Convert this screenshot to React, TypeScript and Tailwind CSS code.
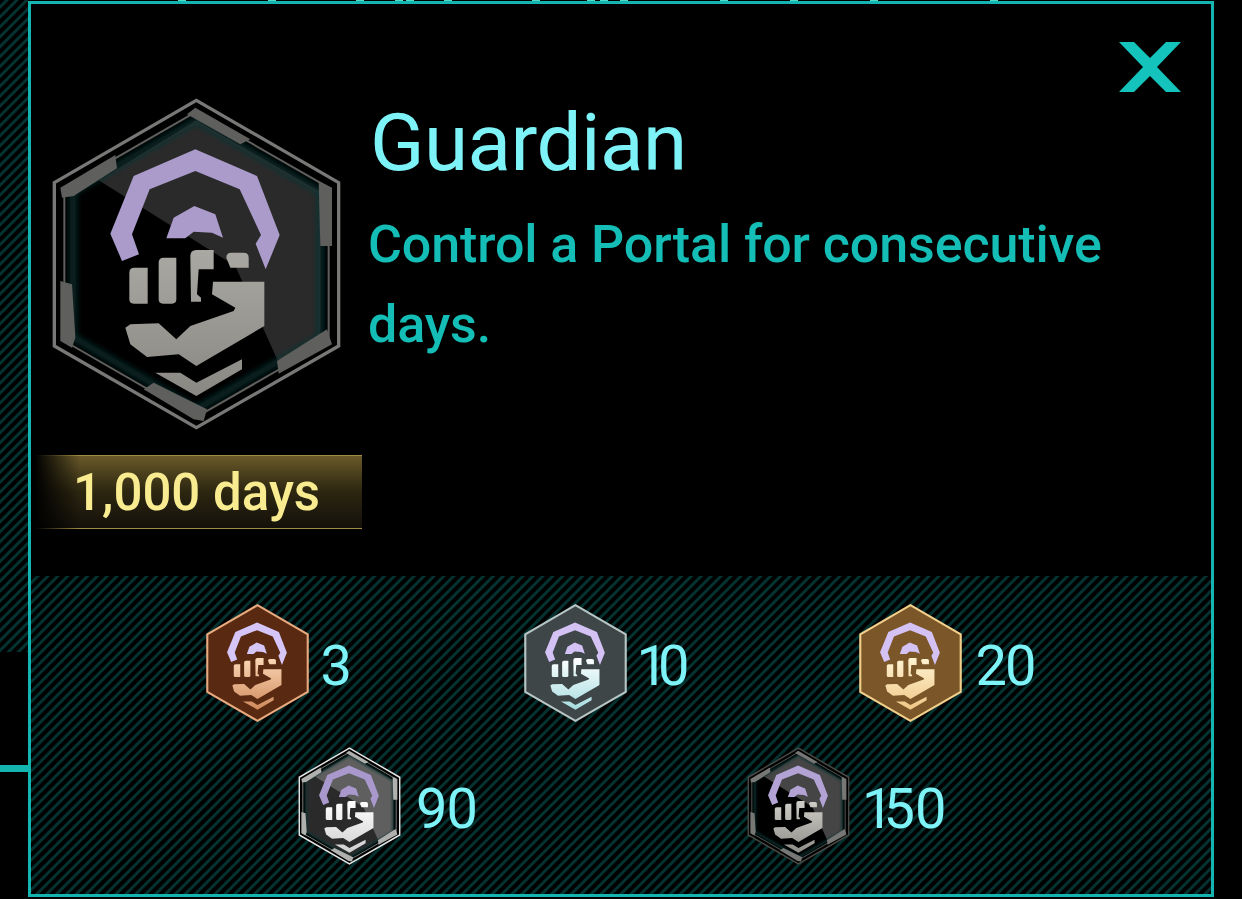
import { useId, type ReactNode } from "react";

const STRIPES =
  "bg-[repeating-linear-gradient(135deg,#000_0px,#000_3px,#043230_4px,#043230_6px,#000_7px)]";

const HEX = "498,58 925,305 925,795 498,1040 72,795 72,305";
const INNER_HEX = "498,118 870,332 870,768 498,985 128,768 128,332";
const GLASS = "205,298 498,118 870,332 870,768 745,845 615,555";

const ARC_OUTER =
  "M240 458 L310 285 L495 205 L680 285 L748 462 L706 565 L676 488 L692 462 L628 325 L495 270 L358 325 L305 460 L326 520 L275 540 Z";
const ARC_INNER = "M408 472 L430 410 L492 375 L555 400 L578 470 L545 455 L490 452 L465 472 Z";
const FIST = [
  "M297 575 Q297 560 312 560 L352 560 L352 668 L310 668 Q297 668 297 655 Z",
  "M385 545 Q385 530 400 530 L438 530 L438 655 Q438 668 425 668 L398 668 Q385 668 385 655 Z",
  "M480 525 Q480 507 498 507 L550 507 L550 565 L505 565 L500 640 L512 650 L512 662 L482 662 Z",
  "M588 530 Q588 515 603 515 L640 515 Q655 515 655 530 L655 560 L600 560 Z",
  "M548 602 L702 602 L702 735 L498 855 L445 820 L350 828 L300 790 L285 740 L300 730 L385 727 L438 775 L480 735 L610 690 L615 680 L545 640 Z",
  "M375 875 L450 875 L498 905 L635 835 L635 865 L498 945 Z",
];
const BRACKETS = [
  "470,100 495,80 660,175 630,190",
  "90,320 255,222 260,262 130,345 95,350",
  "865,300 905,320 905,495 870,495",
  "90,600 125,610 135,770 125,800 90,780",
  "340,925 370,905 530,985 520,1020 490,1015",
  "740,840 890,745 905,790 745,878",
];
// tails of the clipped row above the dialog
const TOP_BITS = [178, 268, 356, 395, 406, 444, 532, 587, 600, 620, 720, 790, 870, 990];

type BadgeProps = {
  className: string;
  outline: string;
  fill: string;
  arc: string;
  fistTop: string;
  fistBottom: string;
  strokeWidth?: number;
  framed?: boolean;
  glass?: string;
  bracket?: string;
};

function Badge({
  className,
  outline,
  fill,
  arc,
  fistTop,
  fistBottom,
  strokeWidth = 18,
  framed,
  glass = "#fff",
  bracket = "#5f5f5d",
}: BadgeProps) {
  const id = useId();
  return (
    <svg viewBox="62 48 873 1002" className={`shrink-0 ${className}`}>
      <defs>
        <linearGradient id={id} x1="0" y1="505" x2="0" y2="945" gradientUnits="userSpaceOnUse">
          <stop offset="0" stopColor={fistTop} />
          <stop offset="1" stopColor={fistBottom} />
        </linearGradient>
        <filter id={`${id}-glow`} x="-10%" y="-10%" width="120%" height="120%">
          <feGaussianBlur stdDeviation="10" />
        </filter>
      </defs>
      {framed ? (
        <>
          <polygon points={HEX} fill="#000" stroke={outline} strokeWidth={strokeWidth} />
          <polygon points={INNER_HEX} fill={fill} />
          <polygon points={GLASS} fill={glass} />
          <polygon points={INNER_HEX} fill="none" stroke="#0c3634" strokeWidth="16" filter={`url(#${id}-glow)`} />
          <polygon points="498,92 895,320 895,780 498,1008 102,780 102,320" fill="none" stroke={bracket} strokeWidth="6" />
          {BRACKETS.map((p) => (
            <polygon key={p} points={p} fill={bracket} />
          ))}
        </>
      ) : (
        <polygon points={HEX} fill={fill} stroke={outline} strokeWidth={strokeWidth} strokeLinejoin="miter" />
      )}
      <path d={ARC_OUTER} fill={arc} />
      <path d={ARC_INNER} fill={arc} />
      {FIST.map((d) => (
        <path key={d} d={d} fill={`url(#${id})`} />
      ))}
    </svg>
  );
}

function Tier({ value, valueClass, ...badge }: BadgeProps & { value: ReactNode; valueClass: string }) {
  return (
    <div className="flex items-center gap-[12px]">
      <Badge {...badge} />
      <span className={`mt-[5px] whitespace-nowrap text-[56px] leading-none text-[#7df3f8] ${valueClass}`}>{value}</span>
    </div>
  );
}

export default function App() {
  return (
    <div className="relative flex h-screen w-full overflow-hidden bg-black font-['Roboto',sans-serif]">
      <div className="absolute inset-x-0 top-0 h-px">
        {TOP_BITS.map((x) => (
          <span key={x} className="absolute top-0 h-px w-[8px] bg-[#4fdcc8]" style={{ left: x }} />
        ))}
      </div>

      <div className="flex w-[28px] shrink-0 flex-col">
        <div className={`h-[652px] ${STRIPES}`} />
        <div className="mt-[113px] h-[7px] bg-[#14b5b0]" />
      </div>

      <div className="mt-px flex h-[896px] w-[1186px] shrink-0 flex-col border-[3px] border-[#14b5b0]">
        <div className="flex h-[572px] shrink-0 pl-[20px] pt-[93px]">
          <div className="relative w-[317px] shrink-0">
            <Badge
              className="h-[334px] w-[291px]"
              outline="#787877"
              strokeWidth={10}
              fill="#000"
              arc="#aa9bcb"
              fistTop="#aaa8a3"
              fistBottom="#8a8883"
              framed
              glass="#ffffff2a"
            />
            <div className="absolute left-[-16px] top-[358px] flex h-[74px] w-[327px] items-center border-y border-[#a08c44] bg-gradient-to-b from-[#6a5a2a] via-[#2c2610] to-[#14110a] pl-[38px] [mask-image:linear-gradient(to_right,transparent,#000_45px)]">
              <span className="text-[51px] font-medium leading-none text-[#f9ec90]">1,000 days</span>
            </div>
          </div>
          <div className="min-w-0 flex-1">
            <div className="ml-[2px] mt-[-2px] text-[80px] leading-[96px] tracking-[-0.5px] text-[#7df3f8]">Guardian</div>
            <div className="mt-[14px] w-[745px] text-[52px] font-medium leading-[80px] tracking-[-0.1px] text-[#14bdb6]">
              Control a Portal for consecutive days.
            </div>
          </div>
          <svg viewBox="0 0 62 50" className="mr-[30px] mt-[-55px] h-[50px] w-[62px] shrink-0 self-start">
            <path d="M0 0 H15 L31 16 L47 0 H62 L38 25 L62 50 H47 L31 34 L15 50 H0 L24 25 Z" fill="#14c4bc" />
          </svg>
        </div>

        <div className={`flex flex-1 flex-col items-center gap-[25px] pr-[3px] pt-[28px] ${STRIPES}`}>
          <div className="flex gap-[175px]">
            <Tier value="3" valueClass="w-[28px]" className="h-[118px] w-[103px]" outline="#e8a97f" fill="#592a11" arc="#d6c6f7" fistTop="#fbd7b6" fistBottom="#cf8a5c" />
            <Tier value="10" valueClass="w-[47px] ml-[-2px] tracking-[-10px]" className="h-[118px] w-[103px]" outline="#b7c5c5" fill="#3e4648" arc="#d4c2f5" fistTop="#ffffff" fistBottom="#a6dde0" />
            <Tier value="20" valueClass="w-[58px] ml-[2px] tracking-[-2px]" className="h-[118px] w-[103px]" outline="#f3cf8c" fill="#7a5628" arc="#d4c2f5" fistTop="#fff3d2" fistBottom="#efc786" />
          </div>
          <div className="ml-[1px] flex gap-[272px]">
            <Tier value="90" valueClass="w-[62px] ml-[3px] mr-[-3px] tracking-[-1px]" className="h-[118px] w-[103px]" outline="#e6e6e6" strokeWidth={12} fill="#2a2a2a" arc="#a898cc" fistTop="#ffffff" fistBottom="#cfcfcf" framed glass="#ffffff40" bracket="#b0b0ae" />
            <Tier
              value={
                <>
                  <span className="tracking-[-10px]">1</span>50
                </>
              }
              valueClass="w-[80px]"
              className="h-[118px] w-[103px]"
              outline="#4a4a46"
              strokeWidth={12}
              fill="#000"
              arc="#b3a3d5"
              fistTop="#cfcdc8"
              fistBottom="#8f8d88"
              framed
              glass="#ffffff45"
              bracket="#777775"
            />
          </div>
        </div>
      </div>
    </div>
  );
}
